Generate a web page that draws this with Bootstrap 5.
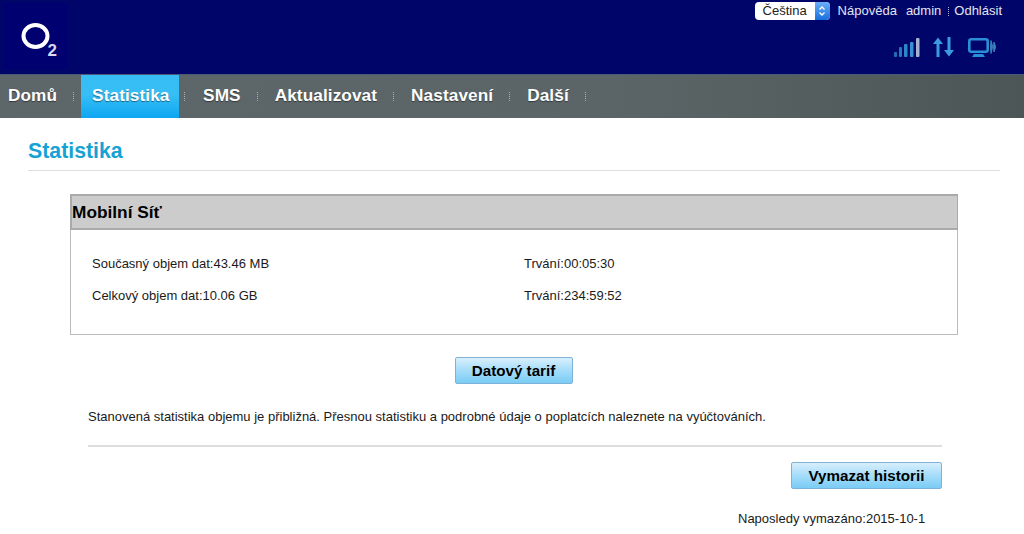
<!DOCTYPE html>
<html lang="cs">
<head>
<meta charset="utf-8">
<title>Statistika</title>
<link href="https://cdn.jsdelivr.net/npm/bootstrap@5.3.0/dist/css/bootstrap.min.css" rel="stylesheet">
<style>
html,body{height:534px;overflow:hidden}
body{font-family:"Liberation Sans",Arial,sans-serif;font-size:13px;color:#1a1a1a;background:#fff}
.top-bar{height:74px;background:#00056a}
.logo-box{width:63px;height:66px;margin:3px 0 0 4px;background:#000070}
.top-links{color:#e4e4ee;font-size:13px;padding:2px 22px 0 0;height:20px}
.lang-pick{width:75px;height:18px;background:#fff;border-radius:4px;color:#222;font-size:13px;padding-left:8px;line-height:18px;margin-right:8px;overflow:hidden}
.lang-arrow{width:15px;height:18px;background:linear-gradient(#6aaef5,#1a6fe0)}
.link-gap-a{margin-right:9px}
.link-sep{margin:0 3px 0 7px;width:3px;height:9px;border-left:1px dotted #aab0cc}
.status-icons{margin-top:17px;padding-right:26px}
.icon-signal{margin-right:12px}
.icon-arrows{margin-right:11px}
.main-nav{height:44px;background:linear-gradient(90deg,#5d6769,#5b6567 60%,#4d5656);border-top:1px solid #4a5a78;color:#fff;font-size:17.200px;letter-spacing:.1px;font-weight:700;text-shadow:0 1px 1px rgba(0,0,0,.45)}
.nav-cell{height:43px;line-height:41px;padding:0 8px}
.nav-cell.is-on{background:linear-gradient(#36bdf3 0,#37bff5 45%,#0ea6f2 100%);padding:0 11px;width:98px;height:43px}
.nav-sep{width:1px;height:9px;border-left:1px dotted #aab0b2;margin:0 9px 0 8px}
.nav-sep.sep-first{margin-right:7px}
.is-on + .nav-sep{margin:0 10px 0 5px}
.page-title{margin:0 24px 0 28px;height:53px;padding-top:21px;border-bottom:1px solid #ddd;color:#17a2d4;font-size:21.300px;font-weight:700;line-height:25px}
.net-panel{margin:23px 66px 0 70px;height:141px;border:1px solid #bbb}
.net-head{height:36px;background:#cccccc;border:2px solid #aaa;border-right-width:1px;margin:-1px -1px 0 -1px;font-size:17.300px;font-weight:700;color:#000;line-height:32px}
.net-body{padding:18px 21px 0}
.net-row{height:32px;line-height:32px}
.net-left{width:432px}
.sky-btn{background:linear-gradient(#d8effc 0,#a9defa 45%,#7accf5 100%);border:1px solid #7fb2d6;border-radius:2px;color:#000;font-size:15.200px;font-weight:700;height:27px;line-height:25px;padding:0;text-align:center}
.btn-a-row{margin-top:22px;padding-left:3px}
.btn-a{width:118px}
.btn-b{width:151px;margin-top:15px}
.note-text{margin:23px 0 0 88px;height:19px;line-height:19px}
.foot-rule{margin:19px 82px 0 88px;border:0;border-top:2px solid #ddd;opacity:1}
.foot-area{padding-right:82px}
.last-wiped{margin-top:20px;line-height:19px;width:204px}
</style>
</head>
<body>
<header class="top-bar d-flex justify-content-between">
  <div class="logo-box">
    <svg width="63" height="66" viewBox="0 0 63 66" role="img" aria-label="O2 logo"><ellipse cx="31.500" cy="33" rx="12" ry="11" fill="none" stroke="#fff" stroke-width="4"/><text x="43.500" y="53" font-family="Liberation Sans, sans-serif" font-weight="700" font-size="17" fill="#d8d8ee">2</text></svg>
  </div>
  <div class="d-flex flex-column align-items-end">
    <div class="top-links d-flex align-items-center">
      <div class="lang-pick d-flex justify-content-between">
        <span>Čeština</span>
        <span class="lang-arrow d-flex align-items-center justify-content-center"><svg width="8" height="12" viewBox="0 0 8 12"><path d="M1.5 4.5 4 2l2.500 2.500M1.500 7.500 4 10l2.500-2.500" fill="none" stroke="#fff" stroke-width="1.300"/></svg></span>
      </div>
      <span class="link-gap-a">Nápověda</span>
      <span>admin</span>
      <span class="link-sep"></span><span>Odhlásit</span>
    </div>
    <div class="status-icons d-flex align-items-center">
      <svg class="icon-signal" width="28" height="20" viewBox="0 0 28 20"><rect x="1" y="15" width="3" height="5" rx="1" fill="#1e70b0"/><rect x="6" y="10" width="3" height="10" rx="1" fill="#2579b8"/><rect x="11" y="7" width="3.500" height="13" rx="1" fill="#2d86c8"/><rect x="17" y="5" width="3.500" height="15" rx="1" fill="#3a90d0"/><rect x="23" y="1" width="3.500" height="19" rx="1" fill="#a8b0d0"/></svg>
      <svg class="icon-arrows" width="22" height="20" viewBox="0 0 22 20"><path d="M5 20V3M16 0v17" fill="none" stroke="#3a9be0" stroke-width="3"/><path d="M5 .5 10 7H0ZM16 19.500 11 13h10Z" fill="#3a9be0"/></svg>
      <svg width="32" height="20" viewBox="0 0 32 20"><rect x="3.300" y="2.300" width="18.400" height="12.400" rx="2" fill="none" stroke="#2a8fd8" stroke-width="2.600"/><path d="M8 17h9l2 3H6Z" fill="#2a8fd8"/><path d="M25 3.500q3 6 0 13q-1-7 0-13ZM28 5q3 5 0 10q-1-5 0-10Z" fill="#3a80b8" stroke="#3a80b8"/></svg>
    </div>
  </div>
</header>
<nav class="main-nav d-flex align-items-center">
  <div class="nav-cell">Domů</div><span class="nav-sep sep-first"></span>
  <div class="nav-cell is-on">Statistika</div><span class="nav-sep"></span>
  <div class="nav-cell">SMS</div><span class="nav-sep"></span>
  <div class="nav-cell">Aktualizovat</div><span class="nav-sep"></span>
  <div class="nav-cell">Nastavení</div><span class="nav-sep"></span>
  <div class="nav-cell">Další</div><span class="nav-sep"></span>
</nav>
<h1 class="page-title">Statistika</h1>
<section class="net-panel">
  <div class="net-head">Mobilní Síť</div>
  <div class="net-body">
    <div class="net-row d-flex"><div class="net-left">Současný objem dat:43.46 MB</div><div>Trvání:00:05:30</div></div>
    <div class="net-row d-flex"><div class="net-left">Celkový objem dat:10.06 GB</div><div>Trvání:234:59:52</div></div>
  </div>
</section>
<div class="btn-a-row d-flex justify-content-center"><button class="btn sky-btn btn-a" type="button">Datový tarif</button></div>
<p class="note-text">Stanovená statistika objemu je přibližná. Přesnou statistiku a podrobné údaje o poplatcích naleznete na vyúčtováních.</p>
<hr class="foot-rule">
<div class="foot-area d-flex flex-column align-items-end">
  <button class="btn sky-btn btn-b" type="button">Vymazat historii</button>
  <div class="last-wiped">Naposledy vymazáno:2015-10-1</div>
</div>
<script src="https://cdn.jsdelivr.net/npm/bootstrap@5.3.0/dist/js/bootstrap.bundle.min.js"></script>
</body>
</html>
